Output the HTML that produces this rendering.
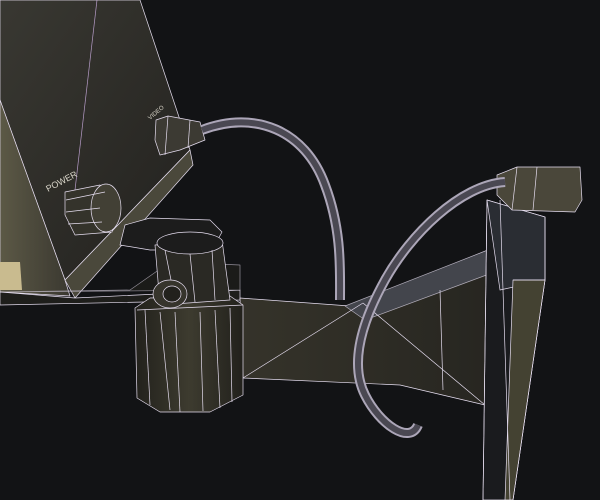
<!DOCTYPE html>
<html><head><meta charset="utf-8"><style>
html,body{margin:0;padding:0;background:#121315;width:600px;height:500px;overflow:hidden}
svg{display:block}
</style></head><body>
<svg width="600" height="500" viewBox="0 0 600 500" xmlns="http://www.w3.org/2000/svg">
<defs>
<linearGradient id="face" x1="0" y1="0" x2="1" y2="1">
<stop offset="0" stop-color="#393832"/><stop offset="1" stop-color="#22211e"/></linearGradient>
<linearGradient id="side" x1="0" y1="0" x2="1" y2="0">
<stop offset="0" stop-color="#5c5946"/><stop offset="1" stop-color="#3a3830"/></linearGradient>
<linearGradient id="arm" x1="0" y1="0" x2="1" y2="0">
<stop offset="0" stop-color="#35332a"/><stop offset="1" stop-color="#262520"/></linearGradient>
<linearGradient id="cyl" x1="0" y1="0" x2="1" y2="0">
<stop offset="0" stop-color="#22211c"/><stop offset="0.5" stop-color="#3d3b2f"/><stop offset="1" stop-color="#22211c"/></linearGradient>
</defs>
<rect width="600" height="500" fill="#121315"/>
<g stroke="#e6def0" stroke-width="0.7" stroke-linejoin="round">
<!-- monitor -->
<polygon points="0,0 140,0 190,150 65,280 0,100" fill="url(#face)"/>
<polygon points="0,100 65,280 70,296 0,292" fill="url(#side)"/>
<polygon points="0,262 20,262 22,290 0,290" fill="#c9bb8f" stroke="none"/>
<polygon points="65,280 190,150 193,165 75,298" fill="#4a483b"/>
<polygon points="0,292 75,298 240,290 240,300 0,305" fill="#1e1e1b"/>
<line x1="97" y1="0" x2="75" y2="190" stroke="#d8b8f0" stroke-opacity="0.8"/>
<!-- knob -->
<polygon points="65,192 100,185 118,205 112,232 75,235 65,215" fill="#34332b"/>
<ellipse cx="106" cy="208" rx="15" ry="24" fill="#424035"/>
<line x1="66" y1="200" x2="105" y2="192"/><line x1="66" y1="212" x2="100" y2="208"/><line x1="68" y1="224" x2="102" y2="222"/>
<!-- video connector -->
<polygon points="156,120 168,116 200,122 205,140 180,150 160,155 155,140" fill="#3c3a33"/>
<line x1="168" y1="116" x2="165" y2="155"/><line x1="190" y1="120" x2="188" y2="148"/>
<!-- left cable -->
<path d="M202,130 C255,110 305,130 325,185 C342,230 340,270 340,300" fill="none" stroke="#aca6b8" stroke-width="10"/>
<path d="M202,130 C255,110 305,130 325,185 C342,230 340,270 340,300" fill="none" stroke="#4a4852" stroke-width="6"/>
<!-- bracket plate -->
<polygon points="125,225 150,218 210,220 222,232 212,250 150,250 120,245" fill="#1c1c1c"/>
<polygon points="0,292 130,290 170,262 240,265 240,290" fill="#1b1b19" stroke-opacity="0.6"/>
<!-- arm -->
<polygon points="240,298 350,306 493,248 505,250 500,290 485,405 400,385 243,378" fill="url(#arm)"/>
<polygon points="345,306 493,248 500,270 365,320" fill="#43454c" stroke-opacity="0.7"/>
<line x1="243" y1="378" x2="363" y2="303"/><line x1="363" y1="303" x2="485" y2="405"/>
<line x1="440" y1="290" x2="443" y2="390"/>
<!-- cylinder -->
<polygon points="135,308 150,298 230,296 243,305 243,395 210,412 160,412 137,398" fill="url(#cyl)"/>
<line x1="137" y1="310" x2="243" y2="305"/>
<line x1="145" y1="310" x2="150" y2="405"/><line x1="160" y1="312" x2="170" y2="410"/><line x1="175" y1="312" x2="180" y2="412"/>
<line x1="200" y1="312" x2="203" y2="411"/><line x1="215" y1="310" x2="220" y2="408"/><line x1="230" y1="308" x2="232" y2="402"/>
<!-- pivot -->
<polygon points="155,245 222,240 230,300 160,305" fill="#2a2924"/>
<ellipse cx="190" cy="243" rx="33" ry="11" fill="#1c1c1c"/>
<line x1="165" y1="250" x2="175" y2="300"/><line x1="190" y1="254" x2="195" y2="302"/><line x1="212" y1="250" x2="215" y2="300"/>
<ellipse cx="170" cy="294" rx="17" ry="14" fill="#36342c"/>
<ellipse cx="172" cy="294" rx="9" ry="8" fill="#22211d"/>
<!-- right post -->
<polygon points="487,200 545,217 545,280 513,500 483,500" fill="#1a1b1e"/>
<polygon points="487,200 545,217 545,280 500,290" fill="#2a2d33"/>
<polygon points="513,280 545,280 513,500 505,500" fill="#444232"/>
<line x1="487" y1="200" x2="483" y2="500"/><line x1="500" y1="200" x2="510" y2="500"/>
<line x1="545" y1="217" x2="545" y2="280"/><line x1="545" y1="280" x2="513" y2="500"/>
<line x1="513" y1="280" x2="545" y2="280"/>
<!-- right connector -->
<polygon points="497,175 517,167 580,167 582,200 575,212 512,210 497,195" fill="#4a473a"/>
<line x1="517" y1="167" x2="512" y2="210"/><line x1="537" y1="167" x2="533" y2="210"/>
<!-- right cable -->
<path d="M505,182 C460,185 410,235 385,280 C360,325 350,365 365,395 C380,425 410,445 418,425" fill="none" stroke="#aca6b8" stroke-width="10"/>
<path d="M505,182 C460,185 410,235 385,280 C360,325 350,365 365,395 C380,425 410,445 418,425" fill="none" stroke="#4a4852" stroke-width="6"/>
</g>
<text x="48" y="192" font-family="Liberation Sans, sans-serif" font-size="9" fill="#d8d4c8" transform="rotate(-28 48 192)">POWER</text>
<text x="150" y="120" font-family="Liberation Sans, sans-serif" font-size="6" fill="#d8d4c8" transform="rotate(-40 150 120)">VIDEO</text>
</svg>
</body></html>
